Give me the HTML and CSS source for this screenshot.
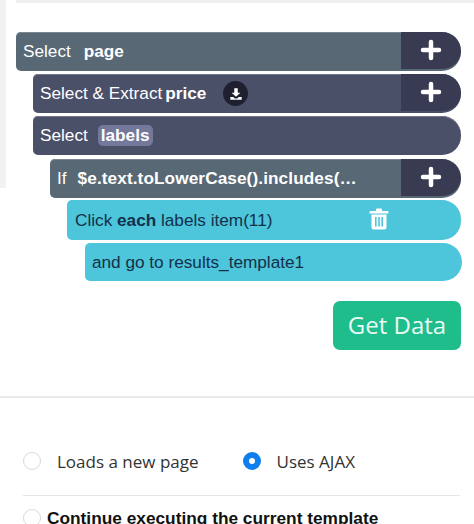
FILE: index.html
```html
<!DOCTYPE html>
<html lang="en">
<head>
<meta charset="utf-8">
<title>Template</title>
<link rel="stylesheet" href="styles.css">
</head>
<body>
<div class="top">
  <div class="side"></div>
  <div class="topbar"></div>
</div>
<div class="rows">
  <div class="row slate lvl0">
    <div class="label"><span class="verb">Select</span><b class="gap10">page</b></div>
    <div class="add"><svg viewBox="0 0 22 22" width="22" height="22"><path class="plus" d="M11 3v16M3 11h16"/></svg></div>
  </div>
  <div class="row navy lvl1">
    <div class="label"><span>Select &amp; Extract</span><b class="gap3">price</b>
      <span class="dl"><svg viewBox="0 0 16 16" width="14" height="14"><path fill="#fff" d="M6 1.5h4v5h3L8 11 3 6.5h3zM1.5 11.5H5l1.5 1.5h3l1.5-1.5h3.500v3h-13z"/></svg></span>
    </div>
    <div class="add"><svg viewBox="0 0 22 22" width="22" height="22"><path class="plus" d="M11 3v16M3 11h16"/></svg></div>
  </div>
  <div class="row navy lvl1">
    <div class="label"><span>Select</span><b class="chip">labels</b></div>
  </div>
  <div class="row slate lvl2">
    <div class="label"><span>If</span><b class="gap10 wide">$e.text.toLowerCase().includes(…</b></div>
    <div class="add"><svg viewBox="0 0 22 22" width="22" height="22"><path class="plus" d="M11 3v16M3 11h16"/></svg></div>
  </div>
  <div class="row cyan lvl3 first-cyan">
    <div class="label dark"><span>Click <b>each</b> labels item(11)</span></div>
    <svg class="trash" viewBox="0 0 20 22" width="20" height="22"><path fill="#fff" fill-rule="evenodd" d="M7 1.500Q7 .5 8 .5h4q1 0 1 1V3h5.500q1 0 1 1v1.500H.5V4q0-1 1-1H7zM2.500 6.500h15V19q0 2.500-2.500 2.500H5Q2.500 21.500 2.500 19zM6 9v9.500h1.600V9zM9.200 9v9.500h1.600V9zM12.400 9v9.500H14V9z"/></svg>
  </div>
  <div class="row cyan lvl4">
    <div class="label dark"><span>and go to results_template1</span></div>
  </div>
</div>
<div class="actions"><button class="get" type="button">Get Data</button></div>
<hr class="rule">
<div class="radios">
  <label class="opt"><span class="radio"></span><span>Loads a new page</span></label>
  <label class="opt"><span class="radio on"></span><span>Uses AJAX</span></label>
</div>
<hr class="rule2">
<div class="cont"><span class="radio"></span><b>Continue executing the current template</b></div>
</body>
</html>
```
FILE: styles.css
```css
* { box-sizing: border-box; }
html, body { margin: 0; height: 524px; overflow: hidden; background: #fff; }
body { font-family: "Liberation Sans", Arial, sans-serif; color: #222; position: relative; }
.top { height: 32px; display: flex; }
.side { position: absolute; left: 0; top: 0; width: 6px; height: 188px; background: #f2f2f3; }
.topbar { margin-left: 16px; flex: 1; height: 3px; background: #efeff0; }
.rows { display: flex; flex-direction: column; padding-right: 13px; }
.row { height: 39px; display: flex; align-items: center; justify-content: space-between; border-radius: 5px 19px 19px 5px; overflow: hidden; color: #fff; font-size: 17.200px; margin-bottom: 3px; }
.slate { background: #586875; box-shadow: inset 0 1px 0 #7c8791; }
.navy { background: #4b5069; box-shadow: inset 0 1px 0 #73768a; }
.cyan { background: #4dc5da; }
.lvl0 { margin-left: 16px; }
.lvl1 { margin-left: 33px; }
.lvl2 { margin-left: 50px; margin-top: 1px; margin-bottom: 2px; }
.lvl3 { margin-left: 67px; height: 40px; justify-content: flex-start; position: relative; }
.lvl4 { margin-left: 85px; margin-right: -1px; height: 38px; }
.label { padding-left: 7px; display: flex; align-items: center; white-space: nowrap; flex: 1; }
.lvl3 .label { padding-left: 8px; }
.gap10 { margin-left: 13px; }
.wide { margin-left: 11px; letter-spacing: .1px; }
.gap3 { margin-left: 3px; }
.chip { margin-left: 10px; background: #74789b; border-radius: 5px; padding: 1px 3px 2px 3px; line-height: 18px; }
.dl { width: 25px; height: 25px; border-radius: 50%; background: #1e2030; margin-left: 17px; display: flex; align-items: center; justify-content: center; }
.add { width: 60px; height: 37px; background: #393b52; display: flex; align-items: center; justify-content: center; padding-bottom: 1px; align-self: flex-start; border-radius: 0 19px 19px 0; padding-right: 1px; }
.plus { fill: none; stroke: #fff; stroke-width: 4.500; stroke-linecap: round; }
.dark { color: #14304a; flex: none; }
.trash { margin-left: 97px; margin-bottom: 2px; flex: none; }
.actions { display: flex; justify-content: flex-end; padding: 17px 13px 0 0; }
.get { width: 128px; height: 49px; border: 0; border-radius: 7px; background: #1fbc8c; color: #eafaf4; font: 24px "Open Sans", sans-serif; padding: 0 0 2px; }
.rule { margin: 46px 0 0; border: 0; height: 2px; background: #e9e9e9; }
.radios { display: flex; align-items: center; margin-top: 52px; padding-left: 23px; height: 22px; font: 17px "Open Sans", sans-serif; color: #333; }
.opt { display: flex; align-items: center; gap: 16px; margin-right: 44px; }
.radio { width: 18px; height: 18px; border-radius: 50%; border: 1.500px solid #d9d9d9; background: #fff; flex: none; display: inline-block; }
.radio.on { border: 6px solid #0f7ff0; }
.rule2 { margin: 23px 14px 0 23px; border: 0; height: 1px; background: #e6e6e6; }
.cont { display: flex; align-items: center; gap: 6px; margin-top: 13px; padding-left: 23px; font-size: 17.300px; color: #111; white-space: nowrap; height: 18px; }
```
